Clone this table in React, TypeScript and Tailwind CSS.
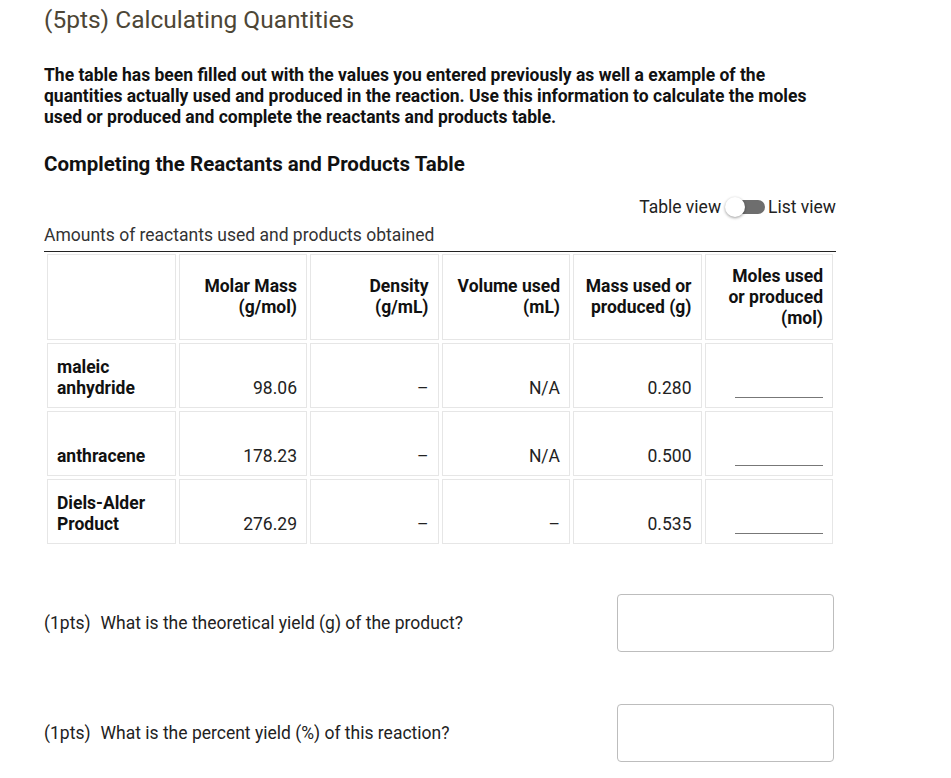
import React from "react";

const rows = [
  { name: ["maleic", "anhydride"], mm: "98.06", density: "–", volume: "N/A", mass: "0.280" },
  { name: ["anthracene"], mm: "178.23", density: "–", volume: "N/A", mass: "0.500" },
  { name: ["Diels-Alder", "Product"], mm: "276.29", density: "–", volume: "–", mass: "0.535" },
];

const headers = [
  "",
  ["Molar Mass", "(g/mol)"],
  ["Density", "(g/mL)"],
  ["Volume used", "(mL)"],
  ["Mass used or", "produced (g)"],
  ["Moles used", "or produced", "(mol)"],
];

export default function App() {
  return (
    <div className="min-h-screen bg-white text-[#212121]" style={{ fontFamily: "Roboto, 'Noto Sans', sans-serif" }}>
      <div className="pl-[44px] pr-[115px] pt-[5px]">
        <h1 className="text-[24.5px] leading-[30px] text-[#4d4636]">(5pts) Calculating Quantities</h1>

        <p className="mt-[30px] text-[17.5px] leading-[21px] font-bold text-[#111]">
          The table has been filled out with the values you entered previously as well a example of the
          quantities actually used and produced in the reaction. Use this information to calculate the moles
          used or produced and complete the reactants and products table.
        </p>

        <h2 className="mt-[22px] text-[20.5px] leading-[28px] font-bold text-[#111]">
          Completing the Reactants and Products Table
        </h2>

        <div className="mt-[17px] flex items-center justify-end text-[17.5px] leading-[24px] text-[#222]">
          <span>Table view</span>
          <span className="relative ml-[4px] mr-[3px] h-[20px] w-[40px] flex items-center">
            <span className="absolute left-[10px] h-[14px] w-[30px] rounded-full bg-[#6e6e6e]" />
            <span className="absolute left-0 h-[20px] w-[20px] rounded-full bg-white shadow-[0_1px_3px_rgba(0,0,0,0.4)]" />
          </span>
          <span>List view</span>
        </div>

        <div className="mt-[4px] text-[17.5px] leading-[24px] text-[#333]">
          Amounts of reactants used and products obtained
        </div>
        <div className="mt-[4px] border-t border-[#222]" />

        <table className="-mt-px w-full border-separate border-spacing-[3px] text-[17.5px] leading-[21px] table-fixed">
          <thead>
            <tr>
              {headers.map((h, i) => (
                <th
                  key={i}
                  className="h-[86px] border border-[#e6e6e6] px-[9px] text-right align-middle font-bold text-[#111]"
                >
                  {Array.isArray(h) && h.map((l) => <div key={l}>{l}</div>)}
                </th>
              ))}
            </tr>
          </thead>
          <tbody>
            {rows.map((r) => (
              <tr key={r.mm}>
                <td className="h-[65px] border border-[#e6e6e6] px-[9px] pb-[8px] align-bottom font-bold text-[#111]">
                  {r.name.map((l) => (
                    <div key={l}>{l}</div>
                  ))}
                </td>
                {[r.mm, r.density, r.volume, r.mass].map((v, i) => (
                  <td key={i} className="border border-[#e6e6e6] px-[9px] pb-[8px] align-bottom text-right text-[#222]">
                    {v}
                  </td>
                ))}
                <td className="border border-[#e6e6e6] px-[9px] pb-[9px] align-bottom">
                  <div className="flex justify-end">
                    <div className="h-[20px] w-[88px] border-b border-[#777]" />
                  </div>
                </td>
              </tr>
            ))}
          </tbody>
        </table>

        <div className="mt-[47px] flex items-center justify-between">
          <div className="text-[17.5px] text-[#222]">
            (1pts)<span className="ml-[10px]">What is the theoretical yield (g) of the product?</span>
          </div>
          <div className="h-[58px] w-[217px] mr-[2px] rounded-[4px] border border-[#bdbdbd]" />
        </div>

        <div className="mt-[52px] flex items-center justify-between">
          <div className="text-[17.5px] text-[#222]">
            (1pts)<span className="ml-[10px]">What is the percent yield (%) of this reaction?</span>
          </div>
          <div className="h-[58px] w-[217px] mr-[2px] rounded-[4px] border border-[#bdbdbd]" />
        </div>
      </div>
    </div>
  );
}
